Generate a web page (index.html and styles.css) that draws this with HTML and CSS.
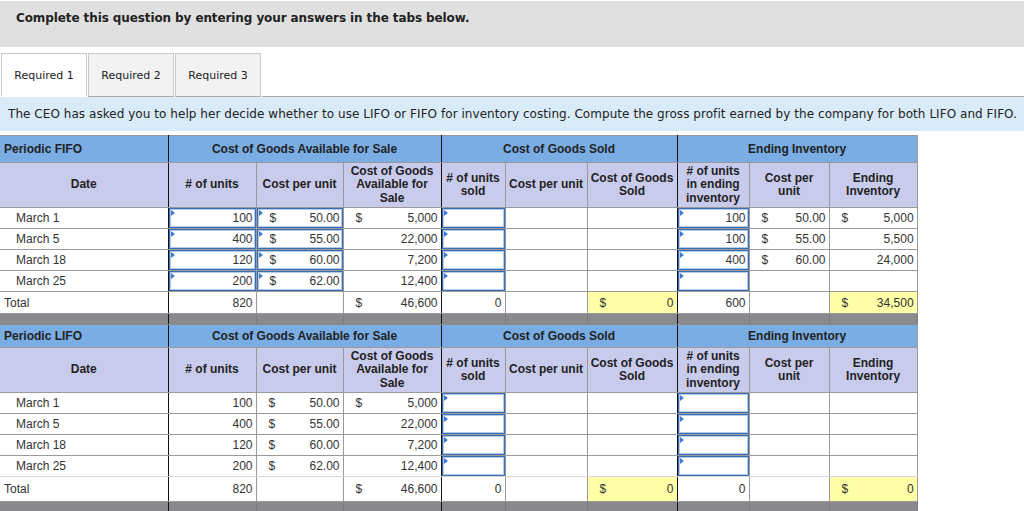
FILE: index.html
```html
<!DOCTYPE html>
<html>
<head>
<meta charset="utf-8">
<link rel="stylesheet" href="styles.css">
</head>
<body>
<div class="topbar">Complete this question by entering your answers in the tabs below.</div>
<div class="tabs">
  <div class="tab active">Required 1</div>
  <div class="tab">Required 2</div>
  <div class="tab">Required 3</div>
  <div class="tabline"></div>
</div>
<div class="prompt">The CEO has asked you to help her decide whether to use LIFO or FIFO for inventory costing. Compute the gross profit earned by the company for both LIFO and FIFO.</div>

<table class="grid">
  <colgroup>
    <col style="width:168px"><col style="width:88px"><col style="width:87px"><col style="width:98px">
    <col style="width:64px"><col style="width:82px"><col style="width:90px">
    <col style="width:72px"><col style="width:80px"><col style="width:88px">
  </colgroup>
  <tbody>
    <tr class="grp first">
      <td class="bk left">Periodic FIFO</td>
      <td class="bk" colspan="3">Cost of Goods Available for Sale</td>
      <td class="bk" colspan="3">Cost of Goods Sold</td>
      <td colspan="3">Ending Inventory</td>
    </tr>
    <tr class="sub">
      <td class="bk">Date</td>
      <td># of units</td>
      <td>Cost per unit</td>
      <td class="bk">Cost of Goods Available for Sale</td>
      <td># of units sold</td>
      <td>Cost per unit</td>
      <td class="bk">Cost of Goods Sold</td>
      <td># of units in ending inventory</td>
      <td>Cost per<br>unit</td>
      <td>Ending<br>Inventory</td>
    </tr>
    <tr class="row">
      <td class="bk date">March 1</td>
      <td class="inp"><div class="box num">100</div></td>
      <td class="inp"><div class="box money"><span>$</span><span>50.00</span></div></td>
      <td class="bk"><div class="money"><span>$</span><span>5,000</span></div></td>
      <td class="inp"><div class="box num"></div></td>
      <td></td>
      <td class="bk"></td>
      <td class="inp"><div class="box num">100</div></td>
      <td><div class="money"><span>$</span><span>50.00</span></div></td>
      <td><div class="money"><span>$</span><span>5,000</span></div></td>
    </tr>
    <tr class="row">
      <td class="bk date">March 5</td>
      <td class="inp"><div class="box num">400</div></td>
      <td class="inp"><div class="box money"><span>$</span><span>55.00</span></div></td>
      <td class="bk num">22,000</td>
      <td class="inp"><div class="box num"></div></td>
      <td></td>
      <td class="bk"></td>
      <td class="inp"><div class="box num">100</div></td>
      <td><div class="money"><span>$</span><span>55.00</span></div></td>
      <td class="num">5,500</td>
    </tr>
    <tr class="row">
      <td class="bk date">March 18</td>
      <td class="inp"><div class="box num">120</div></td>
      <td class="inp"><div class="box money"><span>$</span><span>60.00</span></div></td>
      <td class="bk num">7,200</td>
      <td class="inp"><div class="box num"></div></td>
      <td></td>
      <td class="bk"></td>
      <td class="inp"><div class="box num">400</div></td>
      <td><div class="money"><span>$</span><span>60.00</span></div></td>
      <td class="num">24,000</td>
    </tr>
    <tr class="row">
      <td class="bk date">March 25</td>
      <td class="inp"><div class="box num">200</div></td>
      <td class="inp"><div class="box money"><span>$</span><span>62.00</span></div></td>
      <td class="bk num">12,400</td>
      <td class="inp"><div class="box num"></div></td>
      <td></td>
      <td class="bk"></td>
      <td class="inp"><div class="box num"></div></td>
      <td></td>
      <td></td>
    </tr>
    <tr class="total">
      <td class="bk left">Total</td>
      <td class="num">820</td>
      <td></td>
      <td class="bk"><div class="money"><span>$</span><span>46,600</span></div></td>
      <td class="num">0</td>
      <td></td>
      <td class="bk yel"><div class="money"><span>$</span><span>0</span></div></td>
      <td class="num">600</td>
      <td></td>
      <td class="yel"><div class="money"><span>$</span><span>34,500</span></div></td>
    </tr>
    <tr class="band">
      <td class="bk"></td><td></td><td></td><td class="bk"></td><td></td><td></td><td class="bk"></td><td></td><td></td><td></td>
    </tr>

    <tr class="grp">
      <td class="bk left">Periodic LIFO</td>
      <td class="bk" colspan="3">Cost of Goods Available for Sale</td>
      <td class="bk" colspan="3">Cost of Goods Sold</td>
      <td colspan="3">Ending Inventory</td>
    </tr>
    <tr class="sub">
      <td class="bk">Date</td>
      <td># of units</td>
      <td>Cost per unit</td>
      <td class="bk">Cost of Goods Available for Sale</td>
      <td># of units sold</td>
      <td>Cost per unit</td>
      <td class="bk">Cost of Goods Sold</td>
      <td># of units in ending inventory</td>
      <td>Cost per<br>unit</td>
      <td>Ending<br>Inventory</td>
    </tr>
    <tr class="row">
      <td class="bk date">March 1</td>
      <td class="num">100</td>
      <td><div class="money"><span>$</span><span>50.00</span></div></td>
      <td class="bk"><div class="money"><span>$</span><span>5,000</span></div></td>
      <td class="inp"><div class="box num"></div></td>
      <td></td>
      <td class="bk"></td>
      <td class="inp"><div class="box num"></div></td>
      <td></td>
      <td></td>
    </tr>
    <tr class="row">
      <td class="bk date">March 5</td>
      <td class="num">400</td>
      <td><div class="money"><span>$</span><span>55.00</span></div></td>
      <td class="bk num">22,000</td>
      <td class="inp"><div class="box num"></div></td>
      <td></td>
      <td class="bk"></td>
      <td class="inp"><div class="box num"></div></td>
      <td></td>
      <td></td>
    </tr>
    <tr class="row">
      <td class="bk date">March 18</td>
      <td class="num">120</td>
      <td><div class="money"><span>$</span><span>60.00</span></div></td>
      <td class="bk num">7,200</td>
      <td class="inp"><div class="box num"></div></td>
      <td></td>
      <td class="bk"></td>
      <td class="inp"><div class="box num"></div></td>
      <td></td>
      <td></td>
    </tr>
    <tr class="row light">
      <td class="bk date">March 25</td>
      <td class="num">200</td>
      <td><div class="money"><span>$</span><span>62.00</span></div></td>
      <td class="bk num">12,400</td>
      <td class="inp"><div class="box num"></div></td>
      <td></td>
      <td class="bk"></td>
      <td class="inp"><div class="box num"></div></td>
      <td></td>
      <td></td>
    </tr>
    <tr class="total tall">
      <td class="bk left">Total</td>
      <td class="num">820</td>
      <td></td>
      <td class="bk"><div class="money"><span>$</span><span>46,600</span></div></td>
      <td class="num">0</td>
      <td></td>
      <td class="bk yel"><div class="money"><span>$</span><span>0</span></div></td>
      <td class="num">0</td>
      <td></td>
      <td class="yel"><div class="money"><span>$</span><span>0</span></div></td>
    </tr>
    <tr class="band">
      <td class="bk"></td><td></td><td></td><td class="bk"></td><td></td><td></td><td class="bk"></td><td></td><td></td><td></td>
    </tr>
  </tbody>
</table>
</body>
</html>
```
FILE: styles.css
```css
* { box-sizing: border-box; }
body {
  margin: 0;
  background: #fff;
  color: #333;
  font-family: "Liberation Sans", Arial, sans-serif;
}
.topbar {
  margin-top: 1px;
  height: 46px;
  background: #e0e0e0;
  padding: 10px 0 0 16px;
  font-family: "DejaVu Sans", Verdana, sans-serif;
  font-weight: bold;
  font-size: 12px;
  letter-spacing: -0.1px;
  color: #222;
}
.tabs {
  display: flex;
  margin-top: 6px;
  padding-left: 1px;
  height: 44px;
}
.tab {
  width: 86px;
  height: 44px;
  margin-right: 1px;
  border: 1px solid #c9c9c9;
  border-bottom: 1px solid #a9a9a9;
  background: #f2f2f2;
  display: flex;
  align-items: center;
  justify-content: center;
  font-family: "DejaVu Sans", Verdana, sans-serif;
  font-size: 11px;
  color: #222;
}
.tab.active {
  background: #fff;
  border-bottom-color: #fff;
}
.tabline {
  flex: 1;
  border-bottom: 1px solid #a9a9a9;
}
.prompt {
  height: 34px;
  background: #d9ebf9;
  padding-left: 8px;
  display: flex;
  align-items: center;
  font-family: "DejaVu Sans", Verdana, sans-serif;
  font-size: 12px;
  letter-spacing: 0.05px;
  color: #222;
  white-space: nowrap;
}
.grid {
  margin-top: 4px;
  border-collapse: collapse;
  table-layout: fixed;
  width: 917px;
  font-size: 12px;
}
.grid td {
  border: 1px solid #9a9a9a;
  padding: 0 3px;
  overflow: hidden;
  white-space: nowrap;
}
.grid td:first-child { border-left: none; }
.grid td.bk { border-right: 1px solid #111; }
.grp td {
  background: #79ade4;
  height: 23px;
  font-weight: bold;
  text-align: center;
  color: #222;
}
.grp.first td { height: 27px; }
.grp td.left { text-align: left; padding-left: 4px; }
.sub td {
  background: #c9cbec;
  height: 45px;
  font-weight: bold;
  text-align: center;
  white-space: normal;
  line-height: 13.5px;
  color: #222;
  padding: 0 2px;
}
.row td { height: 21px; background: #fff; }
.row.light td { border-bottom-color: #d8d8d8; }
.total td { height: 22px; background: #fff; }
.total.tall td { height: 25px; }
.total td.left { padding-left: 4px; }
.date { padding-left: 16px !important; }
.num { text-align: right; }
.money {
  display: flex;
  justify-content: space-between;
  padding-left: 9px;
}
.yel { background: #ffffa8 !important; border-top-color: #333 !important; }
.band td {
  height: 11px;
  background: #8a8a8e;
  border-color: #7b7b7f;
  border-top-color: #8a8a8e;
  border-bottom-color: #8a8a8e;
}
.grid td.inp { padding: 0; }
.box {
  position: relative;
  height: 20px;
  line-height: 18px;
  border: 1px solid #3a6db1;
  box-shadow: inset 0 0 0 1px #b3cae8;
  padding-right: 2px;
  background: #fff;
}
.box.money { padding-left: 12px; }
.box::before {
  content: "";
  position: absolute;
  left: 1px;
  top: 1px;
  border-left: 4px solid #3b7ad3;
  border-top: 3px solid transparent;
  border-bottom: 3px solid transparent;
}
```
